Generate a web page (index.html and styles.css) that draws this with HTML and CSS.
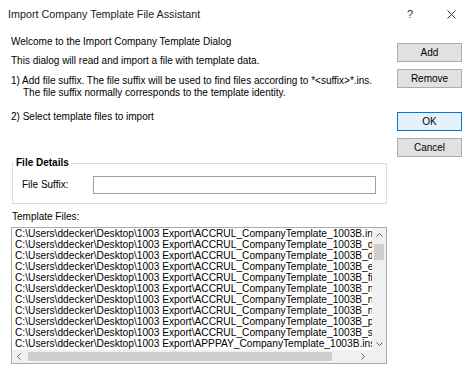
FILE: index.html
```html
<!DOCTYPE html>
<html lang="en">
<head>
<meta charset="utf-8">
<title>Import Company Template File Assistant</title>
<link rel="stylesheet" href="styles.css">
</head>
<body>
<div class="window">
  <div class="titlebar">
    <span class="title">Import Company Template File Assistant</span>
    <span class="help">?</span>
    <svg class="close" width="9" height="9" viewBox="0 0 9 9"><path d="M0.5 0.5L8.5 8.5M8.5 0.5L0.5 8.5" stroke="#333" stroke-width="1" fill="none"/></svg>
  </div>
  <div class="content">
    <div class="left">
      <p class="line l1">Welcome to the Import Company Template Dialog</p>
      <p class="line l2">This dialog will read and import a file with template data.</p>
      <p class="step">1) Add file suffix. The file suffix will be used to find files according to *&lt;suffix&gt;*.ins.<br><span class="indent">The file suffix normally corresponds to the template identity.</span></p>
      <p class="line l4">2) Select template files to import</p>
      <fieldset class="group">
        <legend class="group-title">File Details</legend>
        <div class="field-row">
          <label class="field-label" for="suffix">File Suffix:</label>
          <input class="field-input" id="suffix" type="text">
        </div>
      </fieldset>
      <div class="list-label">Template Files:</div>
      <div class="listbox">
        <div class="list-area">
          <div class="items">
            <div class="item">C:\Users\ddecker\Desktop\1003 Export\ACCRUL_CompanyTemplate_1003B.ins</div>
            <div class="item">C:\Users\ddecker\Desktop\1003 Export\ACCRUL_CompanyTemplate_1003B_deductions.ins</div>
            <div class="item">C:\Users\ddecker\Desktop\1003 Export\ACCRUL_CompanyTemplate_1003B_departments.ins</div>
            <div class="item">C:\Users\ddecker\Desktop\1003 Export\ACCRUL_CompanyTemplate_1003B_earnings.ins</div>
            <div class="item">C:\Users\ddecker\Desktop\1003 Export\ACCRUL_CompanyTemplate_1003B_fica.ins</div>
            <div class="item">C:\Users\ddecker\Desktop\1003 Export\ACCRUL_CompanyTemplate_1003B_names.ins</div>
            <div class="item">C:\Users\ddecker\Desktop\1003 Export\ACCRUL_CompanyTemplate_1003B_notes.ins</div>
            <div class="item">C:\Users\ddecker\Desktop\1003 Export\ACCRUL_CompanyTemplate_1003B_numbers.ins</div>
            <div class="item">C:\Users\ddecker\Desktop\1003 Export\ACCRUL_CompanyTemplate_1003B_pay.ins</div>
            <div class="item">C:\Users\ddecker\Desktop\1003 Export\ACCRUL_CompanyTemplate_1003B_system.ins</div>
            <div class="item">C:\Users\ddecker\Desktop\1003 Export\APPPAY_CompanyTemplate_1003B.ins</div>
          </div>
          <div class="vscroll">
            <div class="varrow"><svg width="7" height="4" viewBox="0 0 7 4"><path d="M0.5 3.5L3.5 0.5L6.5 3.5" stroke="#606060" fill="none"/></svg></div>
            <div class="vthumb"></div>
            <div class="vspace"></div>
            <div class="varrow"><svg width="7" height="4" viewBox="0 0 7 4"><path d="M0.5 0.5L3.5 3.5L6.5 0.5" stroke="#606060" fill="none"/></svg></div>
          </div>
        </div>
        <div class="hscroll">
          <div class="harrow"><svg width="4" height="7" viewBox="0 0 4 7"><path d="M3.5 0.5L0.5 3.5L3.5 6.5" stroke="#606060" fill="none"/></svg></div>
          <div class="hthumb"></div>
          <div class="hspace"></div>
          <div class="harrow harrow-right"><svg width="4" height="7" viewBox="0 0 4 7"><path d="M0.5 0.5L3.5 3.5L0.5 6.5" stroke="#606060" fill="none"/></svg></div>
          <div class="corner"></div>
        </div>
      </div>
    </div>
    <div class="buttons">
      <button class="btn">Add</button>
      <button class="btn btn-remove">Remove</button>
      <button class="btn btn-ok">OK</button>
      <button class="btn btn-cancel">Cancel</button>
    </div>
  </div>
</div>
</body>
</html>
```

FILE: styles.css
```css
html, body {
  margin: 0;
  padding: 0;
  background: #ffffff;
}
body {
  font-family: "Liberation Sans", Arial, sans-serif;
  font-size: 10px;
  color: #000;
  width: 474px;
  height: 387px;
  overflow: hidden;
}
.window {
  display: flex;
  flex-direction: column;
}
.titlebar {
  display: flex;
  align-items: center;
  height: 28px;
  padding-left: 8px;
  padding-right: 18px;
}
.title {
  flex: 1;
  font-size: 10.75px;
  color: #222;
  line-height: 28px;
}
.help {
  width: 12px;
  text-align: center;
  font-size: 11px;
  color: #333;
}
.close {
  margin-left: 31px;
  display: block;
}
.content {
  display: flex;
  align-items: flex-start;
}
.left {
  width: 376px;
  margin-left: 11px;
}
.line {
  margin: 0;
  line-height: 14px;
}
.l1 { margin-top: 7px; }
.l2 { margin-top: 5px; }
.step {
  margin: 7px 0 0 0;
  line-height: 12px;
}
.indent {
  padding-left: 12px;
}
.l4 { margin-top: 11px; }
.group {
  margin: 32px 0 0 1px;
  padding: 6px 10px 9px 1px;
  border: 1px solid #dcdcdc;
  min-width: 0;
}
.group-title {
  font-weight: bold;
  line-height: 14px;
  padding: 0 2px;
}
.field-row {
  display: flex;
  align-items: center;
}
.field-label {
  width: 71px;
  margin-left: 8px;
  line-height: 14px;
}
.field-input {
  width: 283px;
  height: 18px;
  box-sizing: border-box;
  border: 1px solid #a0a0a0;
  margin: 0;
  padding: 0 3px;
  font: inherit;
  background: #fff;
}
.list-label {
  margin-top: 6px;
  margin-left: 1px;
  line-height: 14px;
}
.listbox {
  margin-top: 3px;
  border: 1px solid #acacac;
  background: #fff;
}
.list-area {
  display: flex;
  height: 122px;
}
.items {
  flex: 1;
  overflow: hidden;
  padding-left: 3px;
  min-width: 0;
}
.item {
  white-space: nowrap;
  font-size: 10.2px;
  line-height: 11px;
  height: 11px;
}
.vscroll {
  width: 14px;
  background: #f0f0f0;
  display: flex;
  flex-direction: column;
}
.varrow {
  height: 13px;
  display: flex;
  align-items: center;
  justify-content: center;
}
.varrow svg { display: block; }
.vthumb {
  margin: 3px 2px 0 2px;
  height: 16px;
  background: #cdcdcd;
}
.vspace { flex: 1; }
.hscroll {
  display: flex;
  height: 13px;
  background: #f0f0f0;
}
.harrow {
  width: 13px;
  display: flex;
  align-items: center;
  justify-content: center;
}
.harrow svg { display: block; }
.harrow-right { margin-right: 3px; }
.hthumb {
  width: 304px;
  margin: 2px 0 2px 3px;
  background: #cdcdcd;
}
.hspace { flex: 1; }
.corner {
  width: 14px;
  background: #f0f0f0;
}
.buttons {
  display: flex;
  flex-direction: column;
  margin-left: 10px;
  margin-top: 15px;
}
.btn {
  width: 65px;
  height: 19px;
  box-sizing: border-box;
  margin: 0;
  padding: 0;
  border: 1px solid #adadad;
  background: #e1e1e1;
  font: inherit;
  color: #000;
}
.btn-remove { margin-top: 7px; }
.btn-ok {
  margin-top: 24px;
  border-color: #0078d7;
  background: #e5f1fb;
}
.btn-cancel { margin-top: 7px; }
```
